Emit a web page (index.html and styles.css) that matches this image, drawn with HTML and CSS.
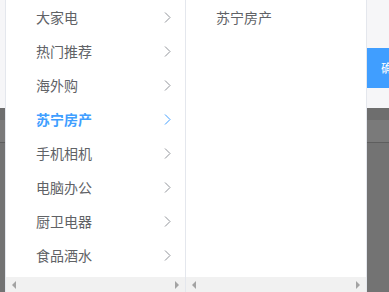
FILE: index.html
```html
<!DOCTYPE html>
<html lang="zh">
<head>
<meta charset="utf-8">
<link rel="stylesheet" href="styles.css">
</head>
<body>
<div class="page">
  <div class="strip strip-left">
    <div class="light light-full"></div>
    <div class="band-a"></div>
    <div class="band-b"></div>
    <div class="band-line"></div>
    <div class="dim"></div>
  </div>
  <div class="panel">
    <div class="menu menu-left">
      <ul class="list">
        <li class="item"><span>大家电</span><svg class="arrow" viewBox="0 0 7 11"><polyline points="1,0.5 6,5.5 1,10.5"/></svg></li>
        <li class="item"><span>热门推荐</span><svg class="arrow" viewBox="0 0 7 11"><polyline points="1,0.5 6,5.5 1,10.5"/></svg></li>
        <li class="item"><span>海外购</span><svg class="arrow" viewBox="0 0 7 11"><polyline points="1,0.5 6,5.5 1,10.5"/></svg></li>
        <li class="item active"><span>苏宁房产</span><svg class="arrow" viewBox="0 0 7 11"><polyline points="1,0.5 6,5.5 1,10.5"/></svg></li>
        <li class="item"><span>手机相机</span><svg class="arrow" viewBox="0 0 7 11"><polyline points="1,0.5 6,5.5 1,10.5"/></svg></li>
        <li class="item"><span>电脑办公</span><svg class="arrow" viewBox="0 0 7 11"><polyline points="1,0.5 6,5.5 1,10.5"/></svg></li>
        <li class="item"><span>厨卫电器</span><svg class="arrow" viewBox="0 0 7 11"><polyline points="1,0.5 6,5.5 1,10.5"/></svg></li>
        <li class="item"><span>食品酒水</span><svg class="arrow" viewBox="0 0 7 11"><polyline points="1,0.5 6,5.5 1,10.5"/></svg></li>
      </ul>
      <div class="hscroll"><i class="tri tri-l"></i><i class="tri tri-r"></i></div>
    </div>
    <div class="menu menu-right">
      <ul class="list">
        <li class="item"><span>苏宁房产</span></li>
      </ul>
      <div class="hscroll"><i class="tri tri-l"></i><i class="tri tri-r"></i></div>
    </div>
  </div>
  <div class="strip strip-right">
    <div class="light light-top"></div>
    <div class="btn">确定</div>
    <div class="light light-bottom"></div>
    <div class="band-a"></div>
    <div class="band-b"></div>
    <div class="band-line"></div>
    <div class="dim"></div>
  </div>
</div>
</body>
</html>
```

FILE: styles.css
```css
* { box-sizing: border-box; }
html, body {
  margin: 0;
  padding: 0;
  width: 389px;
  height: 292px;
  overflow: hidden;
  background: #737373;
  font-family: "Noto Sans CJK SC", "Noto Sans", sans-serif;
}
.page {
  display: flex;
  width: 389px;
  height: 292px;
}
.strip {
  display: flex;
  flex-direction: column;
  height: 292px;
}
.strip-left { width: 5px; }
.strip-right { width: 22px; overflow: hidden; }
.light { background: #f6f6f8; }
.light-full { height: 108px; }
.light-top { height: 48px; }
.light-bottom { height: 20px; }
.btn {
  height: 40px;
  background: #409eff;
  color: #fff;
  font-size: 12px;
  line-height: 40px;
  white-space: nowrap;
  padding-left: 14px;
}
.band-a { height: 12px; background: #6e6e6e; }
.band-b { height: 22px; background: #7a7a7a; }
.band-line { height: 1px; background: #5e5e5e; }
.dim { flex: 1; background: #737373; }

.panel {
  width: 362px;
  height: 292px;
  display: flex;
  background: #fff;
  border-left: 1px solid #e4e7ed;
  border-right: 1px solid #e4e7ed;
}
.menu {
  display: flex;
  flex-direction: column;
  height: 292px;
}
.menu-left {
  width: 180px;
  border-right: 1px solid #e4e7ed;
}
.menu-right { width: 180px; }
.list {
  list-style: none;
  margin: 0;
  padding: 0;
  flex: 1;
}
.item {
  height: 34px;
  display: flex;
  align-items: center;
  justify-content: space-between;
  padding: 0 14px 0 30px;
  font-size: 14px;
  color: #606266;
}
.item span { line-height: 34px; }
.item.active { color: #409eff; font-weight: bold; }
.arrow {
  width: 7px;
  height: 11px;
  fill: none;
  stroke: #909399;
  stroke-width: 1;
}
.item.active .arrow { stroke: #409eff; }
.hscroll {
  height: 15px;
  background: #f1f1f1;
  display: flex;
  align-items: center;
  justify-content: space-between;
  padding: 0 6px;
}
.tri {
  width: 0;
  height: 0;
  border-top: 4px solid transparent;
  border-bottom: 4px solid transparent;
  margin-top: 1px;
}
.tri-l { border-right: 4px solid #a3a3a3; }
.tri-r { border-left: 4px solid #a3a3a3; }
```
